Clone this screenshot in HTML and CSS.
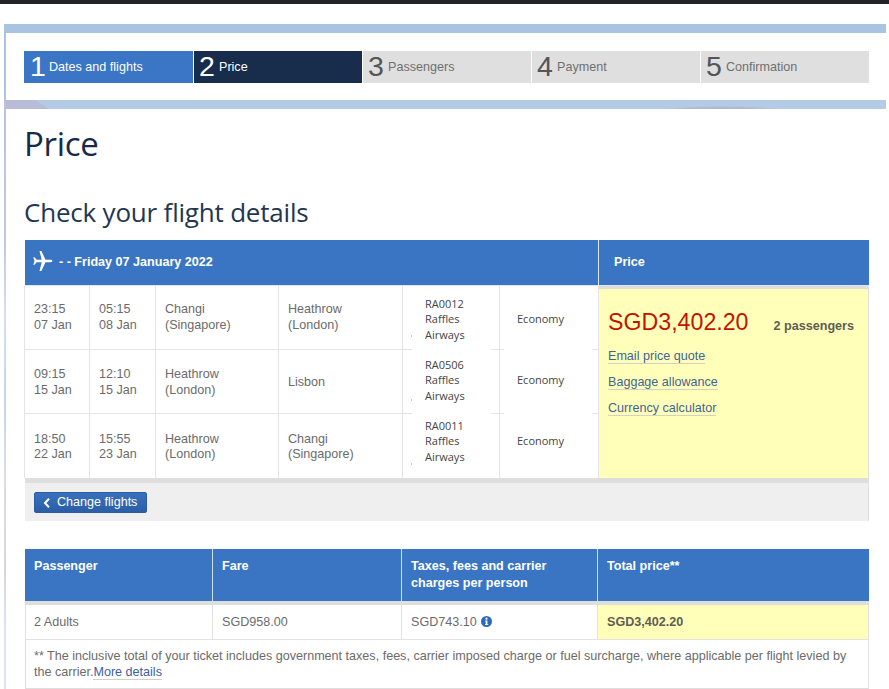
FILE: index.html
```html
<!DOCTYPE html>
<html lang="en">
<head>
<meta charset="utf-8">
<title>Price</title>
<link rel="stylesheet" href="styles.css">
</head>
<body>
<div class="topbar"></div>
<div class="shell">
  <nav class="panel steps-panel">
    <ol class="steps">
      <li class="step done"><b>1</b><span>Dates and flights</span></li>
      <li class="step current"><b>2</b><span>Price</span></li>
      <li class="step"><b>3</b><span>Passengers</span></li>
      <li class="step"><b>4</b><span>Payment</span></li>
      <li class="step"><b>5</b><span>Confirmation</span></li>
    </ol>
  </nav>
  <div class="band"></div>
  <main class="panel main">
    <h1>Price</h1>
    <h2>Check your flight details</h2>
    <section class="flights">
      <header class="flights-head">
        <div class="head-date">
          <svg class="plane" viewBox="0 0 20 22" width="20" height="22"><path d="M19.400 11c0-.8-1-1.200-2.200-1.200H12.500L8.400.9H6.500L8.700 9.800H3.600L1.600 7.200H.3L1.500 11 .3 14.800H1.600L3.600 12.200H8.700L6.500 21.100H8.400L12.500 12.200H17.200c1.200 0 2.200-.4 2.200-1.200z" fill="#fff"/></svg>
          <span>- - Friday 07 January 2022</span>
        </div>
        <div class="head-price">Price</div>
      </header>
      <div class="flights-body">
        <div class="legs">
          <div class="leg">
            <div>23:15<br>07 Jan</div><div>05:15<br>08 Jan</div><div>Changi<br>(Singapore)</div><div>Heathrow<br>(London)</div>
            <div class="carrier">RA0012<br>Raffles<br>Airways</div><div class="cabin">Economy</div>
          </div>
          <div class="leg">
            <div>09:15<br>15 Jan</div><div>12:10<br>15 Jan</div><div>Heathrow<br>(London)</div><div>Lisbon</div>
            <div class="carrier">RA0506<br>Raffles<br>Airways</div><div class="cabin">Economy</div>
          </div>
          <div class="leg">
            <div>18:50<br>22 Jan</div><div>15:55<br>23 Jan</div><div>Heathrow<br>(London)</div><div>Changi<br>(Singapore)</div>
            <div class="carrier">RA0011<br>Raffles<br>Airways</div><div class="cabin">Economy</div>
          </div>
        </div>
        <aside class="quote">
          <div class="quote-line"><span class="amount">SGD3,402.20</span><strong>2 passengers</strong></div>
          <a class="link">Email price quote</a>
          <a class="link">Baggage allowance</a>
          <a class="link">Currency calculator</a>
        </aside>
      </div>
      <footer class="flights-foot">
        <button class="change"><svg viewBox="0 0 8 10" width="8" height="10"><path d="M6 .8 2 5l4 4.200" fill="none" stroke="#fff" stroke-width="2"/></svg><span>Change flights</span></button>
      </footer>
    </section>
    <section class="fares">
      <div class="fare-row fare-head">
        <div>Passenger</div><div>Fare</div><div>Taxes, fees and carrier<br>charges per person</div><div>Total price**</div>
      </div>
      <div class="fare-row fare-data">
        <div>2 Adults</div><div>SGD958.00</div>
        <div>SGD743.10 <svg class="info" viewBox="0 0 11 11" width="11" height="11"><circle cx="5.500" cy="5.500" r="5.500" fill="#2b69bd"/><path d="M4.100 4.500h2.300v3.500h.8v.9H4v-.9h.7V5.400h-.6z" fill="#fff"/><circle cx="5.500" cy="2.700" r="1.100" fill="#fff"/></svg></div>
        <div class="total">SGD3,402.20</div>
      </div>
      <p class="note">** The inclusive total of your ticket includes government taxes, fees, carrier imposed charge or fuel surcharge, where applicable per flight levied by<br>the carrier.<a class="link">More details</a></p>
    </section>
  </main>
</div>
</body>
</html>
```
FILE: styles.css
```css
* { box-sizing: border-box; }
html, body { margin: 0; }
body {
  height: 689px;
  overflow: hidden;
  background: #fff;
  color: #6b6b6b;
  font: 12.58px/15.5px "Liberation Sans", Arial, sans-serif;
}
.topbar { height: 4px; background: #242326; }
.shell {
  width: 882px;
  height: 665px;
  margin: 20px 0 0 4px;
  padding: 9px 0 0 2px;
  background: linear-gradient(#a9c4e0 0, #a9c4e0 60px, #bcc0dc 80px, #c3c7df 220px, #d5e0f0 290px, #c3d6ec 380px, #dcdce4 450px, #d8d4da 550px, #dbe4f2 600px);
}
.panel { background: #fff; width: 883px; }
.steps-panel { height: 67px; padding: 18px 0 0 18px; }
.band {
  height: 9px;
  background: linear-gradient(35deg, #b9bcd6 24px, transparent 25px), radial-gradient(ellipse 55px 3px at 715px 9px, #b1b9d4 60%, transparent), #b4cbe5;
}
.steps { display: grid; grid-template-columns: 169px 168px 168px 168px 168px; gap: 1px; width: 845px; height: 32px; margin: 0; padding: 0; list-style: none; }
.step { display: flex; align-items: center; gap: 5px; padding-left: 5px; background: #dfdfdf; color: #6f6f6f; }
.step b { width: 15px; font-size: 28.5px; font-weight: 400; color: #555; }
.step span { padding-top: 1px; }
.step.done { padding-left: 6px; gap: 4px; background: #3b75c6; color: #fff; }
.step.current { background: #172d4b; color: #fff; }
.step.done b, .step.current b { color: #fff; }

.main { height: 580px; padding: 13px 0 0 19px; }
h1, h2 { margin: 0 0 0 -1px; font-family: "Open Sans", "Noto Sans", sans-serif; font-weight: 400; color: #172b47; white-space: nowrap; }
h1 { font-size: 33px; line-height: 44px; letter-spacing: -.3px; }
h2 { margin-top: 28px; font-size: 26px; line-height: 36px; color: #24364f; letter-spacing: -.2px; }

.flights { width: 844px; margin-top: 10px; }
.flights-head { display: grid; grid-template-columns: 573px 270px; gap: 1px; height: 45px; background: #dce9f7; color: #fff; font-weight: 700; }
.flights-head > div { display: flex; align-items: center; background: #3a75c4; }
.head-date { padding-left: 8px; gap: 6px; }
.plane { margin-top: -3px; }
.head-price { padding-left: 15px; }
.flights-body { display: grid; grid-template-columns: 573px 271px; height: 193px; border-top: 1px solid #dce9f4; }
.legs { display: grid; grid-template-rows: 64px 64px 64px; margin-left: -1px; border-left: 1px solid #e4e4e4; }
.leg { display: grid; grid-template-columns: 65px 66px 123px 124px 97px 99px; }
.leg > div { display: flex; align-items: center; padding: 2px 0 0 9px; border-right: 1px solid #e4e4e4; border-bottom: 1px solid #e4e4e4; white-space: nowrap; }
.leg:first-child > div { padding-top: 0; }
.leg > .carrier, .leg > .cabin { border-bottom: 0; padding-left: 22px; font: 11px/15.3px "Open Sans", "Noto Sans", sans-serif; color: #444; background: linear-gradient(90deg, #e4e4e4 9px, transparent 9px, transparent 88px, #e4e4e4 88px) bottom / 100% 1px no-repeat; }
.leg > .carrier { background: linear-gradient(90deg, #e4e4e4 9px, transparent 9px, transparent 88px, #e4e4e4 88px) bottom / 100% 1px no-repeat, linear-gradient(#d9c3b8, #d9c3b8) 8px calc(100% - 13px) / 1px 2px no-repeat; }
.leg:first-child > .carrier, .leg:first-child > .cabin { padding-top: 2px; }
.leg > .cabin { padding-left: 17px; border-right: 0; background-image: linear-gradient(90deg, #e4e4e4 4px, transparent 4px, transparent 92px, #e4e4e4 92px); }
.leg:nth-child(2) > .carrier, .leg:nth-child(2) > .cabin { padding-top: 0; padding-bottom: 4px; }
.leg:nth-child(3) > div { border-bottom: 0; }
.leg:nth-child(3) > .carrier, .leg:nth-child(3) > .cabin { padding-top: 0; padding-bottom: 10px; }
.leg:nth-child(3) > .carrier { background: linear-gradient(#d9c3b8, #d9c3b8) 8px calc(100% - 13px) / 1px 2px no-repeat; }
.leg:nth-child(3) > .cabin { background: none; }

.quote { display: flex; flex-direction: column; align-items: flex-start; padding: 20px 0 0 9px; border-top: 3px solid #dedede; border-left: 1px solid #e4e4e4; border-right: 1px solid #dedede; background: #ffffba; }
.quote-line { display: flex; align-items: baseline; width: 246px; justify-content: space-between; margin-bottom: 9px; line-height: 27px; white-space: nowrap; }
.quote-line strong { color: #5e5e52; }
.amount { font-size: 23.2px; color: #c21400; }
.link { color: #3f6591; border-bottom: 1px solid #cfd2c4; line-height: 14px; }
.quote .link { margin-bottom: 11px; }

.flights-foot { height: 43px; padding: 9px 9px 0; border-top: 5px solid #dedede; border-right: 1px solid #dedede; background: #efefef; }
.change { display: flex; align-items: center; gap: 6px; width: 113px; height: 21px; padding: 0 0 0 8px; border: 1px solid #2a5ca3; border-radius: 2px; background: linear-gradient(#3970bd, #2a5ea6); color: #fff; font: inherit; white-space: nowrap; }
.change span { padding-top: 1px; }

.fares { width: 844px; margin-top: 28px; }
.fare-row { display: grid; grid-template-columns: 188px 189px 196px 271px; }
.fare-row > div { padding-left: 9px; border-right: 1px solid #e2e2e2; }
.fare-head { height: 52px; background: #3a75c4; color: #fff; font-weight: 700; line-height: 17px; }
.fare-head > div { padding-top: 9px; border-color: #cfe0f4; }
.fare-head > div:last-child { border: 0; }
.fare-data { height: 39px; border-top: 4px solid #dedede; border-left: 1px solid #e2e2e2; border-bottom: 1px solid #e2e2e2; grid-template-columns: 187px 189px 196px 271px; }
.fare-data > div { display: flex; align-items: center; padding-left: 8px; padding-top: 1px; }
.fare-data > div + div { padding-left: 9px; }
.info { margin: -2px 0 0 4px; }
.fare-data .total { background: #ffffba; color: #5e5e52; font-weight: 700; }
.note { height: 49px; margin: 0; padding: 9px 0 0 8px; border: 1px solid #dedede; border-top: 0; white-space: nowrap; }
.note .link { color: #3b5fa5; }
```
